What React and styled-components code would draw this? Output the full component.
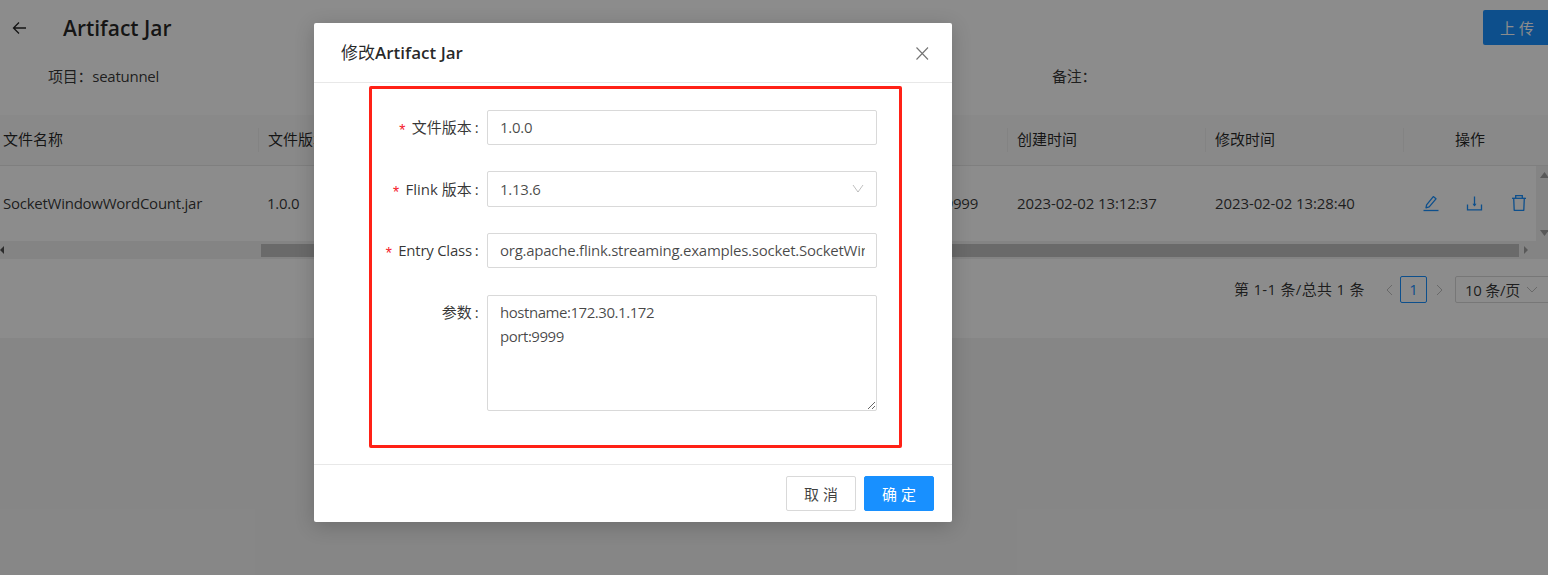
import React from 'react';
import styled, { createGlobalStyle } from 'styled-components';

const GlobalStyle = createGlobalStyle`
  html, body {
    margin: 0;
    padding: 0;
    height: 100%;
    overflow: hidden;
    background: #f5f5f5;
  }
  body, input, textarea, button {
    font-family: "Open Sans", "Noto Sans CJK SC", sans-serif;
    font-size: 15px;
    letter-spacing: -0.25px;
  }
  * {
    box-sizing: border-box;
  }
`;

const Viewport = styled.div`
  width: 1548px;
  height: 575px;
  overflow: hidden;
  position: relative;
`;

const Page = styled.div`
  width: 1553px;
`;

const Card = styled.div`
  background: #fff;
  height: 338px;
`;

const Header = styled.div`
  display: flex;
  align-items: center;
  height: 56px;
  padding: 0 0 1px 12px;
`;

const BackIcon = styled.svg`
  width: 15px;
  height: 14px;
  margin-right: 36px;
`;

const Title = styled.h1`
  flex: 1;
  margin: 0;
  font-size: 21px;
  font-weight: 600;
  letter-spacing: 0;
  color: rgba(0, 0, 0, 0.85);
`;

const UploadButton = styled.button`
  width: 70px;
  height: 35px;
  border: 0;
  border-radius: 2px;
  background: #1890ff;
  color: #fff;
  padding: 0 0 0 5px;
  text-align: left;
  text-indent: 12px;
  letter-spacing: 0;
  flex: none;
`;

const InfoRow = styled.div`
  display: flex;
  height: 40px;
  align-items: center;
  padding: 0 0 2px 48px;
  color: rgba(0, 0, 0, 0.8);
`;

const InfoItem = styled.div`
  width: ${(p) => p.$width || 'auto'};
`;

const TableBlock = styled.div`
  margin-top: 19px;
`;

const TableRow = styled.div`
  display: grid;
  grid-template-columns: 258px 100px 649px 198px 198px 1fr;
  height: ${(p) => p.$height};
  align-items: center;
  background: ${(p) => p.$bg || 'transparent'};
  border-bottom: ${(p) => (p.$head ? '1px solid #e8e8e8' : 'none')};
  color: rgba(0, 0, 0, 0.8);
`;

const HeadCell = styled.div`
  height: 24px;
  line-height: 22px;
  padding-left: ${(p) => p.$pad || '9px'};
  padding-right: ${(p) => p.$right || '0'};
  text-align: ${(p) => p.$align || 'left'};
  letter-spacing: 0;
  color: rgba(0, 0, 0, 0.85);
  border-left: ${(p) => (p.$first ? 'none' : '1px solid #eee')};
`;

const BodyCell = styled.div`
  padding: 0 ${(p) => p.$right || '0'} 2px ${(p) => p.$pad || '9px'};
  text-align: ${(p) => p.$align || 'left'};
  letter-spacing: ${(p) => p.$spacing || 'inherit'};
  white-space: nowrap;
`;

const ActionCell = styled.div`
  display: flex;
  align-items: center;
  padding: 0 0 1px 19px;
  gap: 26px;
`;

const ActionIcon = styled.svg`
  width: 18px;
  height: 18px;
  flex: none;
  color: #1890ff;
`;

const BodyWrap = styled.div`
  position: relative;
`;

const VerticalBar = styled.div`
  position: absolute;
  right: 0;
  top: 0;
  width: 17px;
  height: 93px;
  background: #f1f1f1;
`;

const BarArrow = styled.svg`
  position: absolute;
  width: 9px;
  height: 6px;
  left: ${(p) => p.$left};
  top: ${(p) => p.$top};
  fill: #a3a3a3;
`;

const HorizontalBar = styled.div`
  display: flex;
  align-items: center;
  width: 1536px;
  height: 18px;
  background: #f1f1f1;
`;

const SideArrow = styled.svg`
  width: 5px;
  height: 8px;
  flex: none;
  fill: ${(p) => p.$fill};
`;

const Track = styled.div`
  flex: 1;
  height: 13px;
  margin: 0 5px 0 256px;
  background: #c1c1c1;
`;

const TrackEnd = styled.div`
  width: 7px;
  flex: none;
`;

const Pagination = styled.div`
  display: flex;
  align-items: center;
  height: 27px;
  margin-top: 17px;
  padding-left: 1234px;
  color: rgba(0, 0, 0, 0.8);
  white-space: nowrap;
`;

const PageTotal = styled.span`
  width: 150px;
  flex: none;
  letter-spacing: 0.3px;
  padding-bottom: 2px;
`;

const PageArrow = styled.svg`
  width: 10px;
  height: 12px;
  flex: none;
`;

const PageNumber = styled.div`
  width: 27px;
  height: 27px;
  flex: none;
  margin: 0 8px 0 6px;
  line-height: 24px;
  text-align: center;
  border: 1px solid #1890ff;
  border-radius: 2px;
  color: #1890ff;
`;

const PageSize = styled.div`
  display: flex;
  align-items: center;
  flex: none;
  width: 100px;
  height: 27px;
  margin-left: 10px;
  padding-left: 9px;
  border: 1px solid #d9d9d9;
  border-radius: 2px;
  gap: 6px;
`;

const Mask = styled.div`
  position: absolute;
  inset: 0;
  background: rgba(0, 0, 0, 0.45);
`;

const Modal = styled.div`
  position: absolute;
  left: 314px;
  top: 23px;
  width: 638px;
  background: #fff;
  border-radius: 2px;
  box-shadow: 0 4px 20px rgba(0, 0, 0, 0.2);
`;

const ModalHeader = styled.div`
  display: flex;
  align-items: center;
  justify-content: space-between;
  height: 60px;
  padding: 0 23px 0 27px;
  border-bottom: 1px solid #e8e8e8;
`;

const ModalTitle = styled.div`
  font-size: 17px;
  font-weight: 600;
  letter-spacing: 0;
  padding-bottom: 2px;
  color: rgba(0, 0, 0, 0.85);
`;

const TitleCjk = styled.span`
  font-weight: 400;
`;

const CloseIcon = styled.svg`
  width: 14px;
  height: 14px;
  color: rgba(0, 0, 0, 0.55);
`;

const ModalBody = styled.div`
  display: flex;
  flex-direction: column;
  gap: 26px;
  padding: 27px 75px 53px 0;
  position: relative;
  border-bottom: 1px solid #e8e8e8;
`;

const Annotation = styled.div`
  position: absolute;
  left: 55px;
  top: 3px;
  width: 533px;
  height: 362px;
  border: 3px solid #ff2116;
  border-radius: 2px;
  pointer-events: none;
`;

const FormRow = styled.div`
  display: grid;
  grid-template-columns: 173px 1fr;
  align-items: start;
  height: ${(p) => p.$height || 'auto'};
`;

const Label = styled.label`
  line-height: ${(p) => p.$line || '34px'};
  padding-right: 8.5px;
  text-align: right;
  color: rgba(0, 0, 0, 0.8);
  white-space: nowrap;
`;

const LabelText = styled.span`
  letter-spacing: 0;
`;

const Colon = styled.span`
  margin-left: 3px;
`;

const Star = styled.span`
  margin-right: 5px;
  color: #f5222d;
  font-family: "Liberation Mono", monospace;
  font-size: 16px;
  vertical-align: -3px;
`;

const TextInput = styled.input`
  display: block;
  width: 100%;
  height: 35px;
  padding: 0 11px 2px 12px;
  border: 1px solid #d9d9d9;
  border-radius: 2px;
  color: rgba(0, 0, 0, 0.72);
  outline: none;
`;

const SelectBox = styled.div`
  display: flex;
  align-items: center;
  justify-content: space-between;
  height: 36px;
  padding: 0 12px 1px;
  border: 1px solid #d9d9d9;
  border-radius: 2px;
  color: rgba(0, 0, 0, 0.72);
`;

const Chevron = styled.svg`
  width: 12px;
  height: 9px;
  color: rgba(0, 0, 0, 0.25);
`;

const TextArea = styled.textarea`
  display: block;
  width: 100%;
  height: 116px;
  padding: 4px 12px;
  border: 1px solid #d9d9d9;
  border-radius: 2px;
  line-height: 24px;
  letter-spacing: -0.45px;
  color: rgba(0, 0, 0, 0.72);
  outline: none;
  resize: vertical;
`;

const ModalFooter = styled.div`
  display: flex;
  justify-content: flex-end;
  gap: 8px;
  height: 57px;
  padding: 11px 18px 0 0;
`;

const FooterButton = styled.button`
  width: 70px;
  height: 35px;
  border-radius: 2px;
  border: 1px solid ${(p) => (p.$primary ? '#1890ff' : '#d9d9d9')};
  background: ${(p) => (p.$primary ? '#1890ff' : '#fff')};
  color: ${(p) => (p.$primary ? '#fff' : 'rgba(0, 0, 0, 0.75)')};
  letter-spacing: 0;
  padding: 0;
`;

const Pencil = () => (
  <ActionIcon viewBox="0 0 18 18" fill="none" stroke="currentColor" strokeWidth="1.3">
    <path d="M1.5 16.5h15" />
    <path d="M4 13.8l.6-3L11.3 2.6l2.7 2.2-6.8 8.1z" strokeLinejoin="round" />
  </ActionIcon>
);

const Download = () => (
  <ActionIcon viewBox="0 0 18 18" fill="none" stroke="currentColor" strokeWidth="1.3">
    <path d="M1.5 10.5v5.3h14v-5.3" />
    <path d="M8.5 2.5v9.5" />
    <path d="M6.5 9.8h4l-2 2.8z" fill="currentColor" stroke="none" />
  </ActionIcon>
);

const Trash = () => (
  <ActionIcon viewBox="0 0 18 18" fill="none" stroke="currentColor" strokeWidth="1.3">
    <path d="M2 4.3h14" />
    <path d="M5.7 4V1.7h6.6V4" />
    <path d="M3.7 4.3l.5 12h9.6l.5-12" strokeLinejoin="round" />
  </ActionIcon>
);

export default function App() {
  return (
    <Viewport>
      <GlobalStyle />
      <Page>
        <Card>
          <Header>
            <BackIcon viewBox="0 0 15 14" fill="none" stroke="#000" strokeWidth="1.3" opacity="0.85">
              <path d="M14 7H1.5M7 1.5L1.5 7 7 12.5" />
            </BackIcon>
            <Title>Artifact Jar</Title>
            <UploadButton>上 传</UploadButton>
          </Header>
          <InfoRow>
            <InfoItem $width="1004px">项目：seatunnel</InfoItem>
            <InfoItem>备注：</InfoItem>
          </InfoRow>
          <TableBlock>
            <TableRow $height="51px" $bg="#fafafa" $head>
              <HeadCell $first $pad="3px">文件名称</HeadCell>
              <HeadCell>文件版本</HeadCell>
              <HeadCell $first />
              <HeadCell>创建时间</HeadCell>
              <HeadCell>修改时间</HeadCell>
              <HeadCell $align="center" $pad="0" $right="17px">操作</HeadCell>
            </TableRow>
            <BodyWrap>
              <TableRow $height="75px">
                <BodyCell $pad="3px">SocketWindowWordCount.jar</BodyCell>
                <BodyCell>1.0.0</BodyCell>
                <BodyCell $align="right" $right="29px">port:9999</BodyCell>
                <BodyCell $pad="10px" $spacing="-0.1px">2023-02-02 13:12:37</BodyCell>
                <BodyCell $pad="10px" $spacing="-0.1px">2023-02-02 13:28:40</BodyCell>
                <ActionCell>
                  <Pencil />
                  <Download />
                  <Trash />
                </ActionCell>
              </TableRow>
              <VerticalBar>
                <BarArrow $left="4px" $top="6px" viewBox="0 0 9 6"><path d="M4.5 0L9 6H0z" /></BarArrow>
                <BarArrow $left="4px" $top="64px" viewBox="0 0 9 6"><path d="M0 0h9L4.5 6z" /></BarArrow>
              </VerticalBar>
              <HorizontalBar>
                <SideArrow $fill="#505050" viewBox="0 0 5 8"><path d="M4 0v8L0 4z" /></SideArrow>
                <Track />
                <SideArrow $fill="#a3a3a3" viewBox="0 0 5 8"><path d="M0 0v8l4-4z" /></SideArrow>
                <TrackEnd />
              </HorizontalBar>
            </BodyWrap>
            <Pagination>
              <PageTotal>第 1-1 条/总共 1 条</PageTotal>
              <PageArrow viewBox="0 0 10 12" fill="none" stroke="#bfbfbf"><path d="M8 1L3 6l5 5" /></PageArrow>
              <PageNumber>1</PageNumber>
              <PageArrow viewBox="0 0 10 12" fill="none" stroke="#bfbfbf"><path d="M2 1l5 5-5 5" /></PageArrow>
              <PageSize>
                10 条/页
                <Chevron viewBox="0 0 12 9" fill="none" stroke="currentColor"><path d="M1 2l5 5 5-5" /></Chevron>
              </PageSize>
            </Pagination>
          </TableBlock>
        </Card>
      </Page>
      <Mask />
      <Modal>
        <ModalHeader>
          <ModalTitle><TitleCjk>修改</TitleCjk>Artifact Jar</ModalTitle>
          <CloseIcon viewBox="0 0 14 14" fill="none" stroke="currentColor" strokeWidth="1.1">
            <path d="M1.5 1.5l11.5 12M13 1.5L1.5 13.5" />
          </CloseIcon>
        </ModalHeader>
        <ModalBody>
          <Annotation />
          <FormRow $height="35px">
            <Label><Star>*</Star><LabelText>文件版本</LabelText><Colon>:</Colon></Label>
            <TextInput readOnly value="1.0.0" />
          </FormRow>
          <FormRow $height="36px">
            <Label $line="36px"><Star>*</Star><LabelText>Flink 版本</LabelText><Colon>:</Colon></Label>
            <SelectBox>
              1.13.6
              <Chevron viewBox="0 0 12 9" fill="none" stroke="currentColor"><path d="M1 1l5 7 5-7" /></Chevron>
            </SelectBox>
          </FormRow>
          <FormRow $height="36px">
            <Label><Star>*</Star>Entry Class<Colon>:</Colon></Label>
            <TextInput readOnly value="org.apache.flink.streaming.examples.socket.SocketWindowWordCount" />
          </FormRow>
          <FormRow>
            <Label><LabelText>参数</LabelText><Colon>:</Colon></Label>
            <TextArea readOnly value={'hostname:172.30.1.172\nport:9999'} />
          </FormRow>
        </ModalBody>
        <ModalFooter>
          <FooterButton>取 消</FooterButton>
          <FooterButton $primary>确 定</FooterButton>
        </ModalFooter>
      </Modal>
    </Viewport>
  );
}
